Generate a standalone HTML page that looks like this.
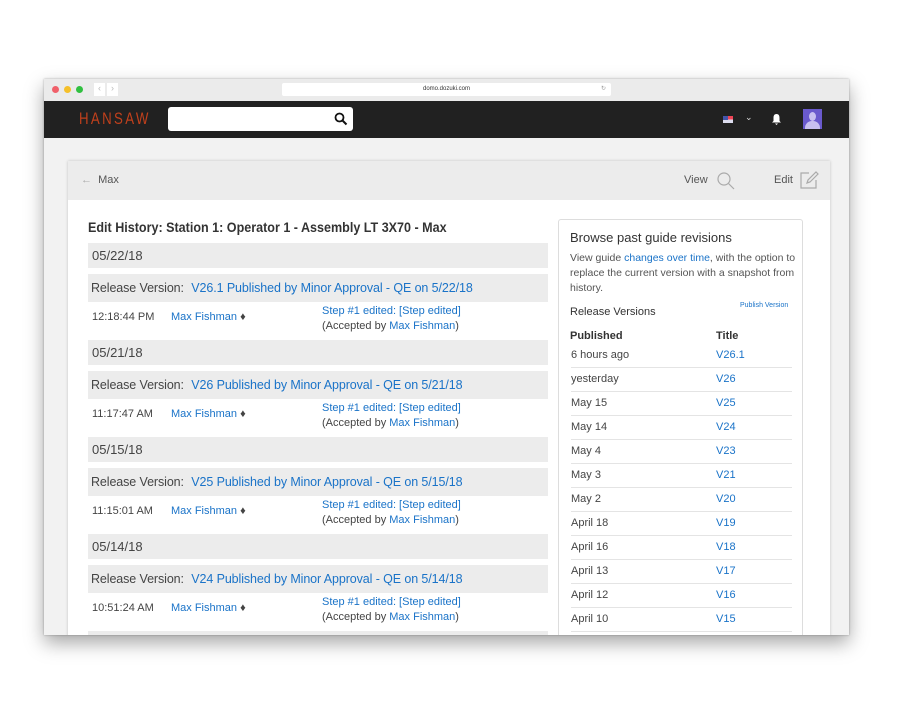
<!DOCTYPE html>
<html><head><meta charset="utf-8"><style>
*{margin:0;padding:0;box-sizing:border-box}
body{width:897px;height:720px;background:#fff;font-family:"Liberation Sans",sans-serif;position:relative;overflow:hidden;color:#333}
.a{position:absolute}
.win{left:44px;top:79px;width:805px;height:556px;background:#f2f2f2;box-shadow:0 8px 18px rgba(0,0,0,.35),0 0 2px rgba(0,0,0,.3);overflow:hidden}
.dbar{background:#ececec;height:25px;left:0;width:460px;font-size:13px;color:#444;padding:5px 0 0 4px}
.rbar{background:#ececec;height:28px;left:0;width:460px;font-size:12.5px;color:#444;padding:7px 0 0 3px;letter-spacing:-.1px}
.rbar b{font-weight:normal;color:#1a73c8;margin-left:4px}
.det{font-size:11px;color:#444}
.row{left:12px;width:221px;height:24px;border-bottom:1px solid #e4e4e4;font-size:11px;color:#444}
.lnk{color:#1a73c8 !important}
</style></head><body>
<div class="a win">
 <div class="a" style="left:0;top:0;width:805px;height:22px;background:#ebebeb"></div>
 <div class="a" style="left:8px;top:7px;width:7px;height:7px;border-radius:50%;background:#f0606a"></div>
 <div class="a" style="left:20px;top:7px;width:7px;height:7px;border-radius:50%;background:#f5c02a"></div>
 <div class="a" style="left:32px;top:7px;width:7px;height:7px;border-radius:50%;background:#30c040"></div>
 <div class="a" style="left:50px;top:4px;width:11px;height:13px;background:#fff;font-size:9px;color:#bbb;text-align:center">‹</div>
 <div class="a" style="left:63px;top:4px;width:11px;height:13px;background:#fff;font-size:9px;color:#bbb;text-align:center">›</div>
 <div class="a" style="left:238px;top:4px;width:329px;height:13px;background:#fff;border-radius:2px;font-size:6px;text-align:center;line-height:13px;color:#333">domo.dozuki.com<span style="position:absolute;right:5px;color:#999">↻</span></div>
 <div class="a" style="left:0;top:22px;width:805px;height:37px;background:#212121"></div>
 <div class="a" style="left:35px;top:30px;font-size:17px;letter-spacing:3px;color:#c0401c;transform:scaleX(.78);transform-origin:left">HANSAW</div>
 <div class="a" style="left:124px;top:28px;width:185px;height:24px;background:#fff;border-radius:3px"></div>
 <svg class="a" style="left:290px;top:33px" width="14" height="14" viewBox="0 0 14 14"><circle cx="5.5" cy="5.5" r="4" fill="none" stroke="#111" stroke-width="1.8"/><path d="M8.5 8.5L12.5 12.5" stroke="#111" stroke-width="2"/></svg>
 <div class="a" style="left:679px;top:37px;width:10px;height:7px;background:linear-gradient(#e45 0,#e45 50%,#dde 50%);"><div style="width:5px;height:4px;background:#45a"></div></div>
 <div class="a" style="left:701px;top:33px;font-size:9px;color:#ddd">⌄</div>
 <svg class="a" style="left:727px;top:34px" width="11" height="12" viewBox="0 0 11 12"><path d="M5.5 1C3 1 2.5 3 2.5 5V8L1 9.5H10L8.5 8V5C8.5 3 8 1 5.5 1ZM4 10.5H7L5.5 12Z" fill="#fff"/></svg>
 <div class="a" style="left:759px;top:30px;width:19px;height:20px;background:#6a5acd;overflow:hidden"><div class="a" style="left:6px;top:3px;width:7px;height:9px;border-radius:50%;background:#c8c0f0"></div><div class="a" style="left:2px;top:12px;width:15px;height:12px;border-radius:7px 7px 0 0;background:#c8c0f0"></div></div>

 <div class="a" style="left:24px;top:82px;width:762px;height:480px;background:#fff;box-shadow:0 0 3px rgba(0,0,0,.2)"></div>
 <div class="a" style="left:24px;top:82px;width:762px;height:39px;background:#ececec"></div>
 <div class="a" style="left:37px;top:95px;font-size:11px;color:#555"><span style="color:#aaa">←</span>&nbsp;&nbsp;Max</div>
 <div class="a" style="left:640px;top:95px;font-size:11px;color:#555">View</div>
 <svg class="a" style="left:672px;top:92px" width="20" height="20" viewBox="0 0 20 20"><circle cx="8" cy="8" r="6" fill="none" stroke="#aaa" stroke-width="1.2"/><path d="M12.5 12.5L18 18" stroke="#aaa" stroke-width="1.2"/></svg>
 <div class="a" style="left:730px;top:95px;font-size:11px;color:#555">Edit</div>
 <svg class="a" style="left:755px;top:91px" width="20" height="20" viewBox="0 0 20 20"><path d="M10 3H2V18H17V10" fill="none" stroke="#aaa" stroke-width="1.2"/><path d="M8 13L9 10L17 2L19 4L11 12Z" fill="none" stroke="#aaa" stroke-width="1.2"/></svg>

 <div class="a" style="left:44px;top:141px;font-size:13.5px;color:#333;font-weight:bold;transform:scaleX(.93);transform-origin:left">Edit History: Station 1: Operator 1 - Assembly LT 3X70 - Max</div>

 <div class="a" style="left:44px;top:164px;width:460px">
  <div class="a dbar" style="top:0">05/22/18</div>
  <div class="a rbar" style="top:31px">Release Version: <b>V26.1 Published by Minor Approval - QE on 5/22/18</b></div>
  <div class="a det" style="left:4px;top:68px">12:18:44 PM</div>
  <div class="a det lnk" style="left:83px;top:68px">Max Fishman <span style="color:#444">♦</span></div>
  <div class="a det" style="left:234px;top:61px;line-height:15px"><span class="lnk">Step #1 edited: [Step edited]</span><br>(Accepted by <span class="lnk">Max Fishman</span>)</div>
 </div>
 <div class="a" style="left:44px;top:261px;width:460px">
  <div class="a dbar" style="top:0">05/21/18</div>
  <div class="a rbar" style="top:31px">Release Version: <b>V26 Published by Minor Approval - QE on 5/21/18</b></div>
  <div class="a det" style="left:4px;top:68px">11:17:47 AM</div>
  <div class="a det lnk" style="left:83px;top:68px">Max Fishman <span style="color:#444">♦</span></div>
  <div class="a det" style="left:234px;top:61px;line-height:15px"><span class="lnk">Step #1 edited: [Step edited]</span><br>(Accepted by <span class="lnk">Max Fishman</span>)</div>
 </div>
 <div class="a" style="left:44px;top:358px;width:460px">
  <div class="a dbar" style="top:0">05/15/18</div>
  <div class="a rbar" style="top:31px">Release Version: <b>V25 Published by Minor Approval - QE on 5/15/18</b></div>
  <div class="a det" style="left:4px;top:68px">11:15:01 AM</div>
  <div class="a det lnk" style="left:83px;top:68px">Max Fishman <span style="color:#444">♦</span></div>
  <div class="a det" style="left:234px;top:61px;line-height:15px"><span class="lnk">Step #1 edited: [Step edited]</span><br>(Accepted by <span class="lnk">Max Fishman</span>)</div>
 </div>
 <div class="a" style="left:44px;top:455px;width:460px">
  <div class="a dbar" style="top:0">05/14/18</div>
  <div class="a rbar" style="top:31px">Release Version: <b>V24 Published by Minor Approval - QE on 5/14/18</b></div>
  <div class="a det" style="left:4px;top:68px">10:51:24 AM</div>
  <div class="a det lnk" style="left:83px;top:68px">Max Fishman <span style="color:#444">♦</span></div>
  <div class="a det" style="left:234px;top:61px;line-height:15px"><span class="lnk">Step #1 edited: [Step edited]</span><br>(Accepted by <span class="lnk">Max Fishman</span>)</div>
  <div class="a dbar" style="top:97px"></div>
 </div>

 <div class="a" style="left:514px;top:140px;width:245px;height:430px;border:1px solid #ddd;border-radius:3px;background:#fff">
  <div class="a" style="left:11px;top:10px;font-size:13px;color:#333">Browse past guide revisions</div>
  <div class="a" style="left:11px;top:31px;width:230px;font-size:10.5px;line-height:15px;color:#555">View guide <span class="lnk">changes over time</span>, with the option to replace the current version with a snapshot from history.</div>
  <div class="a" style="left:11px;top:86px;font-size:11px;color:#333">Release Versions</div>
  <div class="a lnk" style="left:181px;top:82px;font-size:7px">Publish Version</div>
  <div class="a" style="left:11px;top:110px;font-size:11px;font-weight:bold;color:#333">Published</div>
  <div class="a" style="left:157px;top:110px;font-size:11px;font-weight:bold;color:#333">Title</div>
  <div class="a" style="left:0;top:124px;width:245px">
   <div class="a row" style="top:0"><span class="a" style="top:5px">6 hours ago</span><span class="a lnk" style="left:145px;top:5px">V26.1</span></div>
   <div class="a row" style="top:24px"><span class="a" style="top:5px">yesterday</span><span class="a lnk" style="left:145px;top:5px">V26</span></div>
   <div class="a row" style="top:48px"><span class="a" style="top:5px">May 15</span><span class="a lnk" style="left:145px;top:5px">V25</span></div>
   <div class="a row" style="top:72px"><span class="a" style="top:5px">May 14</span><span class="a lnk" style="left:145px;top:5px">V24</span></div>
   <div class="a row" style="top:96px"><span class="a" style="top:5px">May 4</span><span class="a lnk" style="left:145px;top:5px">V23</span></div>
   <div class="a row" style="top:120px"><span class="a" style="top:5px">May 3</span><span class="a lnk" style="left:145px;top:5px">V21</span></div>
   <div class="a row" style="top:144px"><span class="a" style="top:5px">May 2</span><span class="a lnk" style="left:145px;top:5px">V20</span></div>
   <div class="a row" style="top:168px"><span class="a" style="top:5px">April 18</span><span class="a lnk" style="left:145px;top:5px">V19</span></div>
   <div class="a row" style="top:192px"><span class="a" style="top:5px">April 16</span><span class="a lnk" style="left:145px;top:5px">V18</span></div>
   <div class="a row" style="top:216px"><span class="a" style="top:5px">April 13</span><span class="a lnk" style="left:145px;top:5px">V17</span></div>
   <div class="a row" style="top:240px"><span class="a" style="top:5px">April 12</span><span class="a lnk" style="left:145px;top:5px">V16</span></div>
   <div class="a row" style="top:264px"><span class="a" style="top:5px">April 10</span><span class="a lnk" style="left:145px;top:5px">V15</span></div>
  </div>
 </div>
</div>
</body></html>
